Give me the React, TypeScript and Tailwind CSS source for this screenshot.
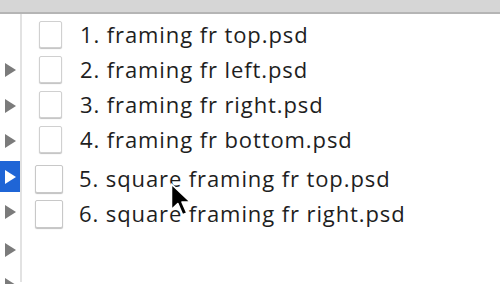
import React from "react";

const Tri = ({ white }: { white?: boolean }) => (
  <svg width="11" height="14" viewBox="0 0 11 14" className="block">
    <path d="M0 0 L11 7 L0 14 Z" fill={white ? "#ffffff" : "#7b7b7b"} />
  </svg>
);

const items = [
  "1. framing fr top.psd",
  "2. framing fr left.psd",
  "3. framing fr right.psd",
  "4. framing fr bottom.psd",
  "5. square framing fr top.psd",
  "6. square framing fr right.psd",
];

export default function App() {
  return (
    <div
      className="relative w-[500px] h-[284px] overflow-hidden bg-white"
      style={{ fontFamily: '"Open Sans", "Liberation Sans", Arial, sans-serif' }}
    >
      <div className="h-[14px] bg-[#d6d6d6] border-b-2 border-[#b5b5b5]" />
      <div className="flex h-[268px]">
        <div className="w-[20px] shrink-0 flex flex-col pt-[3px]">
          <div className="h-[35px] shrink-0" />
          <div className="h-[36px] shrink-0 flex items-center pl-[5px]"><Tri /></div>
          <div className="h-[35px] shrink-0 flex items-center pl-[5px]"><Tri /></div>
          <div className="h-[35px] shrink-0 flex items-center pl-[5px]"><Tri /></div>
          <div className="h-[31px] shrink-0 mt-[3px] flex items-center pl-[5px] bg-[#1f65d6]"><Tri white /></div>
          <div className="h-[40px] shrink-0 flex items-center pl-[5px]"><Tri /></div>
          <div className="h-[35px] shrink-0 flex items-center pl-[5px]"><Tri /></div>
          <div className="h-[35px] shrink-0 flex items-center pl-[5px]"><Tri /></div>
        </div>
        <div className="w-[2px] shrink-0 bg-[#e2e2e2]" />
        <div className="flex flex-col pt-[3px] text-[22px] tracking-[0.9px] text-[#1e1e1e]">
          {items.map((t, i) => {
            const big = i >= 4;
            return (
              <div
                key={t}
                className={
                  big
                    ? "flex shrink-0 items-center h-[35px] pl-[13px] " + (i === 4 ? "mt-[4px]" : "")
                    : "flex shrink-0 items-center h-[35px] pl-[17px]"
                }
              >
                <div
                  className={
                    big
                      ? "w-[28px] h-[28px] shrink-0 bg-white border border-[#c8c8c8] shadow-[0_1px_1px_rgba(0,0,0,0.25)] rounded-[2px]"
                      : "w-[23px] h-[27px] shrink-0 bg-white border border-[#d0d0d0] shadow-[0_1px_1px_rgba(0,0,0,0.25)] rounded-[2px]"
                  }
                />
                <span className={big ? "ml-[16px] whitespace-nowrap" : "ml-[18px] whitespace-nowrap"}>{t}</span>
              </div>
            );
          })}
        </div>
      </div>
      <svg
        className="absolute left-[169px] top-[183px]"
        width="24"
        height="36"
        viewBox="0 0 22 34"
      >
        <path
          d="M2 1 L2 25 L8 19.5 L12.5 30 L16.5 28.3 L12 18 L20 18 Z"
          fill="#000"
          stroke="#fff"
          strokeWidth="1.5"
          strokeLinejoin="round"
        />
      </svg>
    </div>
  );
}
